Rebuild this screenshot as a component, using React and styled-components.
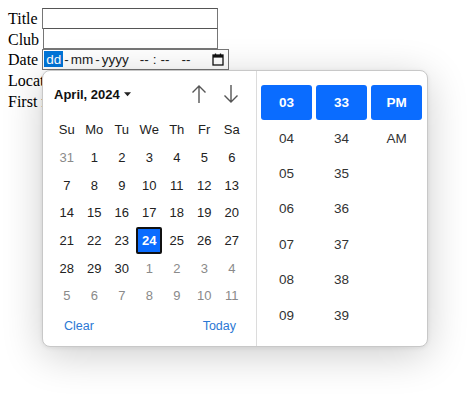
import React from "react";
import styled, { createGlobalStyle } from "styled-components";

const GlobalStyle = createGlobalStyle`
  html, body {
    margin: 0;
    background: #ffffff;
  }
  body {
    padding: 8px;
    min-height: 100vh;
    box-sizing: border-box;
    font-family: "Liberation Serif", "Times New Roman", serif;
    font-size: 16px;
    color: #000;
  }
`;

const weekdays = ["Su", "Mo", "Tu", "We", "Th", "Fr", "Sa"];

// april 2024, starting from sunday march 31
const buildDays = () => {
  const days = [{ n: 31, muted: true }];
  for (let i = 1; i <= 30; i++) days.push({ n: i, muted: false });
  for (let i = 1; i <= 11; i++) days.push({ n: i, muted: true });
  return days;
};

const hours = ["03", "04", "05", "06", "07", "08", "09"];
const minutes = ["33", "34", "35", "36", "37", "38", "39"];
const meridiem = ["PM", "AM"];

export default function App() {
  const days = buildDays();
  return (
    <Page>
      <GlobalStyle />
      <Row>
        <Label>Title</Label>
        <TextInput width={176} />
      </Row>
      <Row>
        <Label>Club</Label>
        <TextInput width={175} />
      </Row>
      <Row>
        <Label>Date</Label>
        <DateField>
          <Segment active>dd</Segment>
          <Sep>-</Sep>
          <Segment>mm</Segment>
          <Sep>-</Sep>
          <Segment>yyyy</Segment>
          <Gap w={9} />
          <Segment>--</Segment>
          <Sep wide>:</Sep>
          <Segment>--</Segment>
          <Gap w={10} />
          <Segment>--</Segment>
          <CalIcon viewBox="0 0 12 13">
            <rect x="1" y="2" width="10" height="10" fill="none" stroke="#111" strokeWidth="1.3" />
            <rect x="1" y="2" width="10" height="2.6" fill="#111" />
            <line x1="3.5" y1="0.5" x2="3.5" y2="2.5" stroke="#111" strokeWidth="1.3" />
            <line x1="8.5" y1="0.5" x2="8.5" y2="2.5" stroke="#111" strokeWidth="1.3" />
          </CalIcon>
        </DateField>
      </Row>
      <Row>
        <Label>Location</Label>
        <TextInput width={176} />
      </Row>
      <Row>
        <Label>First name</Label>
        <TextInput width={176} />
      </Row>

      <Popup>
        <CalendarPane>
          <CalHeader>
            <MonthLabel>
              April, 2024
              <Caret viewBox="0 0 8 5">
                <path d="M0 0 L8 0 L4 4.5 Z" fill="#222" />
              </Caret>
            </MonthLabel>
            <Arrows>
              <ArrowIcon viewBox="0 0 16 20">
                <path d="M8 19 V2 M1.5 8.5 L8 2 L14.5 8.5" fill="none" stroke="#555" strokeWidth="1.4" />
              </ArrowIcon>
              <ArrowIcon viewBox="0 0 16 20">
                <path d="M8 1 V18 M1.5 11.5 L8 18 L14.5 11.5" fill="none" stroke="#555" strokeWidth="1.4" />
              </ArrowIcon>
            </Arrows>
          </CalHeader>
          <DayGrid>
            {weekdays.map((d) => (
              <WeekDay key={d}>{d}</WeekDay>
            ))}
            {days.map((d, i) => (
              <DayCell key={i} muted={d.muted}>
                {!d.muted && d.n === 24 ? <Selected>24</Selected> : d.n}
              </DayCell>
            ))}
          </DayGrid>
          <CalFooter>
            <LinkButton>Clear</LinkButton>
            <LinkButton>Today</LinkButton>
          </CalFooter>
        </CalendarPane>
        <TimePane>
          <TimeColumn>
            {hours.map((h, i) => (
              <TimeCell key={h} selected={i === 0}>
                {h}
              </TimeCell>
            ))}
          </TimeColumn>
          <TimeColumn>
            {minutes.map((m, i) => (
              <TimeCell key={m} selected={i === 0}>
                {m}
              </TimeCell>
            ))}
          </TimeColumn>
          <TimeColumn>
            {meridiem.map((m, i) => (
              <TimeCell key={m} selected={i === 0}>
                {m}
              </TimeCell>
            ))}
          </TimeColumn>
        </TimePane>
      </Popup>
    </Page>
  );
}

const Page = styled.div`
  position: relative;
`;

const Row = styled.div`
  height: 20.6px;
  display: flex;
  align-items: center;
  line-height: 1;
`;

const Label = styled.span`
  padding-top: 2px;
  margin-right: 4px;
  white-space: nowrap;
`;

const TextInput = styled.div`
  width: ${({ width }) => width}px;
  height: 21px;
  flex-shrink: 0;
  box-sizing: border-box;
  border: 1px solid #767676;
  border-top-color: #555;
  background: #fff;
`;

const DateField = styled.div`
  width: 187px;
  height: 21px;
  flex-shrink: 0;
  box-sizing: border-box;
  border: 1px solid #767676;
  display: flex;
  align-items: center;
  padding-left: 1px;
  font-family: "Liberation Sans", Arial, sans-serif;
  font-size: 13.5px;
  color: #222;
  background: #fff;
`;

const Segment = styled.span`
  display: inline-flex;
  align-items: center;
  height: 16px;
  padding: 0 ${({ active }) => (active ? "2px" : "1px")};
  background: ${({ active }) => (active ? "#0075d8" : "transparent")};
  color: ${({ active }) => (active ? "#fff" : "#222")};
`;

const Sep = styled.span`
  padding: 0 ${({ wide }) => (wide ? "3px" : "1px")};
`;

const Gap = styled.span`
  width: ${({ w }) => w}px;
`;

const CalIcon = styled.svg`
  width: 12px;
  height: 13px;
  margin-left: auto;
  margin-right: 4px;
`;

const Popup = styled.div`
  position: absolute;
  left: 34px;
  top: 62px;
  width: 386px;
  height: 277px;
  box-sizing: border-box;
  background: #fff;
  border: 1px solid #c8c8c8;
  border-radius: 8px;
  box-shadow: 0 8px 40px rgba(0, 0, 0, 0.2), 0 1px 4px rgba(0, 0, 0, 0.08);
  display: flex;
  overflow: hidden;
  font-family: "Liberation Sans", Arial, sans-serif;
  font-size: 13px;
  color: #222;
`;

const CalendarPane = styled.div`
  width: 214px;
  box-sizing: border-box;
  padding: 12px 11px 0 10px;
  border-right: 1px solid #dcdcdc;
  display: flex;
  flex-direction: column;
`;

const CalHeader = styled.div`
  display: flex;
  align-items: center;
  justify-content: space-between;
  height: 22px;
  padding-left: 1px;
`;

const MonthLabel = styled.div`
  font-weight: bold;
  font-size: 13px;
  display: flex;
  align-items: center;
  gap: 4px;
  color: #111;
`;

const Caret = styled.svg`
  width: 7px;
  height: 5px;
`;

const Arrows = styled.div`
  display: flex;
  gap: 16px;
  margin-right: 6px;
`;

const ArrowIcon = styled.svg`
  width: 16px;
  height: 20px;
`;

const DayGrid = styled.div`
  margin-top: 11px;
  display: grid;
  grid-template-columns: repeat(7, 27.5px);
  grid-auto-rows: 27.7px;
`;

const WeekDay = styled.div`
  display: flex;
  align-items: center;
  justify-content: center;
  color: #222;
`;

const DayCell = styled.div`
  display: flex;
  align-items: center;
  justify-content: center;
  color: ${({ muted }) => (muted ? "#8a8a8a" : "#222")};
`;

const Selected = styled.div`
  width: 26px;
  height: 27px;
  box-sizing: border-box;
  display: flex;
  align-items: center;
  justify-content: center;
  background: #0a6cff;
  border: 2px solid #111;
  border-radius: 2px;
  color: #fff;
  font-weight: bold;
`;

const CalFooter = styled.div`
  display: flex;
  justify-content: space-between;
  padding: 0 9px 0 11px;
  margin-top: 9px;
`;

const LinkButton = styled.div`
  color: #2b78d4;
  font-size: 12.5px;
`;

const TimePane = styled.div`
  flex: 1;
  display: flex;
  gap: 4px;
  padding: 14px 5px 0 4px;
`;

const TimeColumn = styled.div`
  width: 51px;
  display: flex;
  flex-direction: column;
`;

const TimeCell = styled.div`
  height: 35.4px;
  flex-shrink: 0;
  display: flex;
  align-items: center;
  justify-content: center;
  border-radius: 3px;
  background: ${({ selected }) => (selected ? "#0a6cff" : "transparent")};
  color: ${({ selected }) => (selected ? "#fff" : "#333")};
  font-weight: ${({ selected }) => (selected ? "bold" : "normal")};
  font-size: 13.5px;
`;
